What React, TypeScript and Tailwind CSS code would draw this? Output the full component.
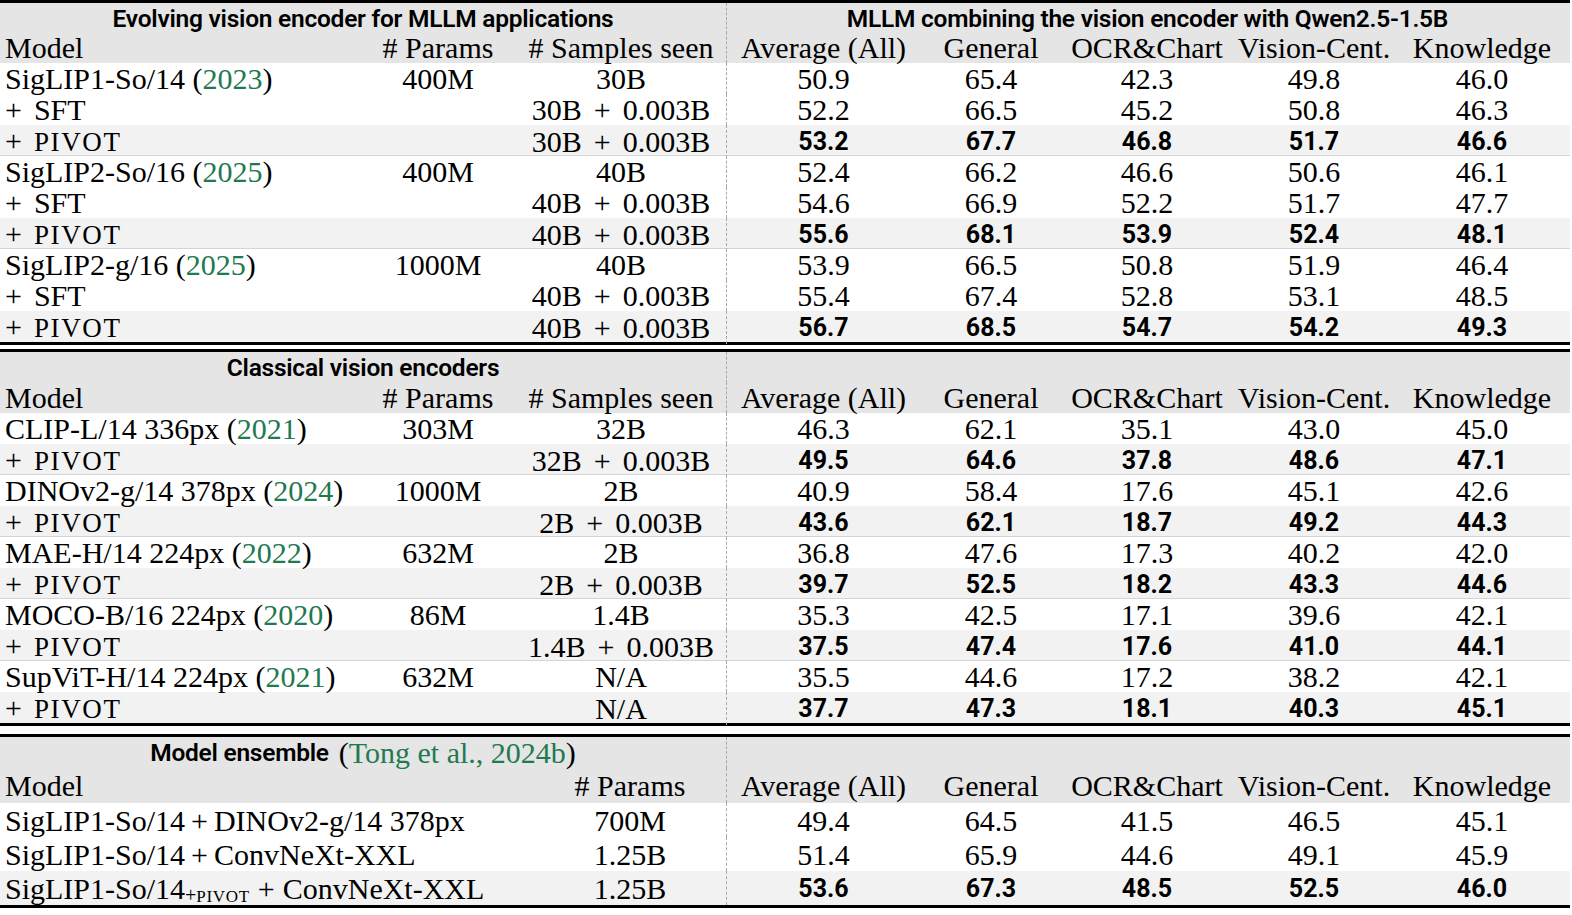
import React from "react";

const G1 = "grid grid-cols-[376px_124px_16px_210px_194px_142px_170px_164px_172px]";
const G3 = "grid grid-cols-[534px_192px_194px_142px_170px_164px_172px]";
const SERIF = "font-['Liberation_Serif',serif]";
const SANS = "font-['Roboto',sans-serif]";
const TITLE = `${SANS} font-semibold text-[24.5px] tracking-[-0.01em]`;

function Yr({ y }: { y: string }) {
  return (
    <>
      (<span className="text-[#1f7a50]">{y}</span>)
    </>
  );
}

function Pivot() {
  return <span className="text-[27px] tracking-[0.06em]">PIVOT</span>;
}

function Plus({ label }: { label: React.ReactNode }) {
  return (
    <span>
      +<span className="ml-[12px]">{label}</span>
    </span>
  );
}

function Samples({ s }: { s: string }) {
  const parts = s.split(" + ");
  if (parts.length === 1) return <>{s}</>;
  return (
    <>
      {parts[0]}
      <span className="mx-[12px]">+</span>
      {parts[1]}
    </>
  );
}

function Metrics({ vals, bold }: { vals: string[]; bold?: boolean }) {
  return (
    <>
      {vals.map((v, i) => (
        <div
          key={i}
          className={`flex items-center justify-center ${i === 0 ? "border-l border-dashed border-[#a8a8a8]" : ""} ${
            bold ? `${SANS} font-bold text-[25px]` : ""
          }`}
        >
          {v}
        </div>
      ))}
    </>
  );
}

const HEAD = ["Average (All)", "General", "OCR&Chart", "Vision-Cent.", "Knowledge"];

type Row = {
  model: React.ReactNode;
  params?: string;
  samples: string;
  vals: string[];
  kind: "base" | "sft" | "pivot";
};

const sec1: Row[] = [
  { model: <>SigLIP1-So/14 <Yr y="2023" /></>, params: "400M", samples: "30B", vals: ["50.9", "65.4", "42.3", "49.8", "46.0"], kind: "base" },
  { model: <Plus label="SFT" />, samples: "30B + 0.003B", vals: ["52.2", "66.5", "45.2", "50.8", "46.3"], kind: "sft" },
  { model: <Plus label={<Pivot />} />, samples: "30B + 0.003B", vals: ["53.2", "67.7", "46.8", "51.7", "46.6"], kind: "pivot" },
  { model: <>SigLIP2-So/16 <Yr y="2025" /></>, params: "400M", samples: "40B", vals: ["52.4", "66.2", "46.6", "50.6", "46.1"], kind: "base" },
  { model: <Plus label="SFT" />, samples: "40B + 0.003B", vals: ["54.6", "66.9", "52.2", "51.7", "47.7"], kind: "sft" },
  { model: <Plus label={<Pivot />} />, samples: "40B + 0.003B", vals: ["55.6", "68.1", "53.9", "52.4", "48.1"], kind: "pivot" },
  { model: <>SigLIP2-g/16 <Yr y="2025" /></>, params: "1000M", samples: "40B", vals: ["53.9", "66.5", "50.8", "51.9", "46.4"], kind: "base" },
  { model: <Plus label="SFT" />, samples: "40B + 0.003B", vals: ["55.4", "67.4", "52.8", "53.1", "48.5"], kind: "sft" },
  { model: <Plus label={<Pivot />} />, samples: "40B + 0.003B", vals: ["56.7", "68.5", "54.7", "54.2", "49.3"], kind: "pivot" },
];

const sec2: Row[] = [
  { model: <>CLIP-L/14 336px <Yr y="2021" /></>, params: "303M", samples: "32B", vals: ["46.3", "62.1", "35.1", "43.0", "45.0"], kind: "base" },
  { model: <Plus label={<Pivot />} />, samples: "32B + 0.003B", vals: ["49.5", "64.6", "37.8", "48.6", "47.1"], kind: "pivot" },
  { model: <>DINOv2-g/14 378px <Yr y="2024" /></>, params: "1000M", samples: "2B", vals: ["40.9", "58.4", "17.6", "45.1", "42.6"], kind: "base" },
  { model: <Plus label={<Pivot />} />, samples: "2B + 0.003B", vals: ["43.6", "62.1", "18.7", "49.2", "44.3"], kind: "pivot" },
  { model: <>MAE-H/14 224px <Yr y="2022" /></>, params: "632M", samples: "2B", vals: ["36.8", "47.6", "17.3", "40.2", "42.0"], kind: "base" },
  { model: <Plus label={<Pivot />} />, samples: "2B + 0.003B", vals: ["39.7", "52.5", "18.2", "43.3", "44.6"], kind: "pivot" },
  { model: <>MOCO-B/16 224px <Yr y="2020" /></>, params: "86M", samples: "1.4B", vals: ["35.3", "42.5", "17.1", "39.6", "42.1"], kind: "base" },
  { model: <Plus label={<Pivot />} />, samples: "1.4B + 0.003B", vals: ["37.5", "47.4", "17.6", "41.0", "44.1"], kind: "pivot" },
  { model: <>SupViT-H/14 224px <Yr y="2021" /></>, params: "632M", samples: "N/A", vals: ["35.5", "44.6", "17.2", "38.2", "42.1"], kind: "base" },
  { model: <Plus label={<Pivot />} />, samples: "N/A", vals: ["37.7", "47.3", "18.1", "40.3", "45.1"], kind: "pivot" },
];

function DataRows({ rows }: { rows: Row[] }) {
  return (
    <>
      {rows.map((r, i) => {
        const pivot = r.kind === "pivot";
        const last = i === rows.length - 1;
        return (
          <div
            key={i}
            className={`${G1} h-[31px] ${pivot ? "bg-[#f2f2f2]" : "bg-white"} ${
              pivot && !last ? "border-b border-[#d4d4d4]" : ""
            }`}
          >
            <div className="flex items-center pl-[5px] whitespace-nowrap">{r.model}</div>
            <div className="flex items-center justify-center">{r.params ?? ""}</div>
            <div />
            <div className="flex items-center justify-center whitespace-nowrap">
              <Samples s={r.samples} />
            </div>
            <Metrics vals={r.vals} bold={pivot} />
          </div>
        );
      })}
    </>
  );
}

function Header1({ title, right, titleH }: { title: React.ReactNode; right?: string; titleH: string }) {
  return (
    <div className="bg-[#e5e5e5]">
      <div className={`grid grid-cols-[726px_842px] ${titleH}`}>
        <div className={`flex items-center justify-center whitespace-nowrap ${TITLE}`}>{title}</div>
        <div className={`flex items-center justify-center whitespace-nowrap border-l border-dashed border-[#a8a8a8] ${TITLE}`}>
          {right ?? ""}
        </div>
      </div>
      <div className={`${G1} h-[31px]`}>
        <div className="flex items-center pl-[5px]">Model</div>
        <div className="flex items-center justify-center"># Params</div>
        <div />
        <div className="flex items-center justify-center whitespace-nowrap"># Samples seen</div>
        <Metrics vals={HEAD} />
      </div>
    </div>
  );
}

function DoubleRule({ gap }: { gap: string }) {
  return (
    <div>
      <div className="h-[3px] bg-black" />
      <div className={`${gap} bg-white`} />
      <div className="h-[3px] bg-black" />
    </div>
  );
}

const sec3 = [
  {
    model: (
      <>
        SigLIP1-So/14<span className="mx-[6px]">+</span>DINOv2-g/14 378px
      </>
    ),
    params: "700M",
    vals: ["49.4", "64.5", "41.5", "46.5", "45.1"],
    bold: false,
  },
  {
    model: (
      <>
        SigLIP1-So/14<span className="mx-[6px]">+</span>ConvNeXt-XXL
      </>
    ),
    params: "1.25B",
    vals: ["51.4", "65.9", "44.6", "49.1", "45.9"],
    bold: false,
  },
  {
    model: (
      <>
        SigLIP1-So/14
        <span className="relative top-[7px] text-[20px] leading-none">
          +<span className="text-[17px] tracking-[0.04em]">PIVOT</span>
        </span>
        <span className="mx-[8px]">+</span>ConvNeXt-XXL
      </>
    ),
    params: "1.25B",
    vals: ["53.6", "67.3", "48.5", "52.5", "46.0"],
    bold: true,
  },
];

export default function App() {
  return (
    <div className={`w-[1570px] bg-white text-black ${SERIF} text-[30px] leading-[31px]`}>
      <div className="h-[3px] bg-black" />
      <Header1
        titleH="h-[29px]"
        title="Evolving vision encoder for MLLM applications"
        right="MLLM combining the vision encoder with Qwen2.5-1.5B"
      />
      <DataRows rows={sec1} />
      <DoubleRule gap="h-[4px]" />
      <Header1 titleH="h-[30px]" title="Classical vision encoders" />
      <DataRows rows={sec2} />
      <DoubleRule gap="h-[8px]" />
      <div className="bg-[#e5e5e5]">
        <div className="grid grid-cols-[726px_842px] h-[31px]">
          <div className="flex items-center justify-center whitespace-nowrap">
            <span className={`${TITLE} mr-[10px]`}>Model ensemble</span>
            <span>
              (<span className="text-[#1f7a50]">Tong et al., 2024b</span>)
            </span>
          </div>
          <div className="border-l border-dashed border-[#a8a8a8]" />
        </div>
        <div className={`${G3} h-[35px]`}>
          <div className="flex items-center pl-[5px]">Model</div>
          <div className="flex items-center justify-center"># Params</div>
          <Metrics vals={HEAD} />
        </div>
      </div>
      {sec3.map((r, i) => (
        <div key={i} className={`${G3} h-[34px] ${r.bold ? "bg-[#f2f2f2]" : "bg-white"}`}>
          <div className="flex items-center pl-[5px] whitespace-nowrap">{r.model}</div>
          <div className="flex items-center justify-center">{r.params}</div>
          <Metrics vals={r.vals} bold={r.bold} />
        </div>
      ))}
      <div className="h-[3px] bg-black" />
    </div>
  );
}
